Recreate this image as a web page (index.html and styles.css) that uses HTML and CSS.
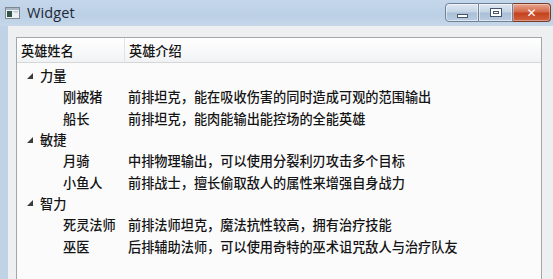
FILE: index.html
```html
<!DOCTYPE html>
<html lang="zh-CN">
<head>
    <meta charset="UTF-8">
    <meta name="viewport" content="width=device-width, initial-scale=1.0">
    <title>Widget</title>
    <link rel="stylesheet" href="styles.css">
</head>
<body>
    <div class="window">
        <div class="titlebar">
            <svg class="app-icon" width="15" height="12" viewBox="0 0 15 12">
                <rect x="0.5" y="0.5" width="14" height="11" fill="#eef1f4" stroke="#7f8790"/>
                <rect x="1" y="1" width="13" height="2" fill="#a9b6c4"/>
                <rect x="2" y="4" width="5" height="6" fill="#35574a"/>
                <rect x="8.5" y="4" width="4.5" height="1.5" fill="#c2c8cf"/>
            </svg>
            <span class="title">Widget</span>
            <div class="controls">
                <div class="ctl ctl-min"><span class="glyph-min"></span></div>
                <div class="ctl ctl-max"><span class="glyph-max"></span></div>
                <div class="ctl ctl-close">&#x2715;</div>
            </div>
        </div>

        <div class="client">
            <div class="tree">
                <div class="tree-header">
                    <div class="col col-name">英雄姓名</div>
                    <div class="col col-desc">英雄介绍</div>
                </div>

                <div class="row group"><div class="name"><span class="arrow"></span>力量</div><div class="desc"></div></div>
                <div class="row"><div class="name child">刚被猪</div><div class="desc">前排坦克，能在吸收伤害的同时造成可观的范围输出</div></div>
                <div class="row"><div class="name child">船长</div><div class="desc">前排坦克，能肉能输出能控场的全能英雄</div></div>

                <div class="row group"><div class="name"><span class="arrow"></span>敏捷</div><div class="desc"></div></div>
                <div class="row"><div class="name child">月骑</div><div class="desc">中排物理输出，可以使用分裂利刃攻击多个目标</div></div>
                <div class="row"><div class="name child">小鱼人</div><div class="desc">前排战士，擅长偷取敌人的属性来增强自身战力</div></div>

                <div class="row group"><div class="name"><span class="arrow"></span>智力</div><div class="desc"></div></div>
                <div class="row"><div class="name child">死灵法师</div><div class="desc">前排法师坦克，魔法抗性较高，拥有治疗技能</div></div>
                <div class="row"><div class="name child">巫医</div><div class="desc">后排辅助法师，可以使用奇特的巫术诅咒敌人与治疗队友</div></div>
            </div>
        </div>
    </div>
</body>
</html>
```

FILE: styles.css
```css
* {
    margin: 0;
    padding: 0;
    box-sizing: border-box;
}

body {
    width: 553px;
    height: 279px;
    overflow: hidden;
    background: #bfd2e6;
    font-family: "Noto Sans CJK SC", "Noto Sans", sans-serif;
    color: #141414;
}

.window {
    display: flex;
    flex-direction: column;
    height: 100%;
}

/* Title bar */
.titlebar {
    height: 26px;
    flex: none;
    display: flex;
    align-items: flex-start;
    background: linear-gradient(to bottom, #c4d6ea 0%, #bcd0e5 60%, #c6d7e9 100%);
}

.app-icon {
    margin: 7px 0 0 5px;
}

.title {
    margin: 3px 0 0 7px;
    font-family: "Open Sans", "Noto Sans", sans-serif;
    font-size: 14.5px;
    color: #1c2838;
    letter-spacing: 0.1px;
}

.controls {
    margin-left: auto;
    margin-right: 2px;
    display: flex;
    margin-top: 3px;
}

.ctl {
    height: 19px;
    border: 1px solid #6f8197;
    display: flex;
    align-items: center;
    justify-content: center;
}

.ctl-min,
.ctl-max {
    width: 34px;
    background: linear-gradient(to bottom, #dfe8f2 0%, #c3d3e4 48%, #aabfd6 52%, #b9cbe0 100%);
    box-shadow: inset 0 0 0 1px rgba(255, 255, 255, 0.55);
}

.ctl-min {
    border-radius: 4px 0 0 4px;
}

.ctl-max {
    border-left: none;
}

.ctl-close {
    width: 38px;
    border-left: none;
    border-color: #7a3a2a;
    border-radius: 0 4px 4px 0;
    background: linear-gradient(to bottom, #e8a68f 0%, #d46a4b 45%, #c4431f 55%, #d2603e 100%);
    box-shadow: inset 0 0 0 1px rgba(255, 255, 255, 0.35);
    color: #fff;
    font-size: 12px;
    font-weight: bold;
    font-family: "DejaVu Sans", sans-serif;
}

.glyph-min {
    display: block;
    width: 11px;
    height: 4px;
    margin-top: 7px;
    background: #fff;
    border: 1px solid #43566e;
}

.glyph-max {
    display: block;
    width: 12px;
    height: 9px;
    background: #fff;
    border: 1px solid #43566e;
    box-shadow: inset 0 0 0 2px #fff, inset 0 0 0 3px #43566e;
}

/* Client area */
.client {
    flex: 1;
    margin-left: 8px;
    background: #eeeff1;
    padding: 11px 11px 0 8px;
    display: flex;
}

.tree {
    flex: 1;
    background: #fbfbfc;
    border: 1px solid #a3a6ab;
    border-bottom: none;
    font-size: 13.2px;
    font-weight: 500;
}

.tree-header {
    height: 25px;
    display: grid;
    grid-template-columns: 108px 1fr;
    background: linear-gradient(to bottom, #ffffff 0%, #f7f8f9 60%, #f1f2f4 100%);
    border-bottom: 1px solid #d5d6d8;
}

.col {
    display: flex;
    align-items: center;
    padding-top: 1px;
}

.col-name {
    padding-left: 4px;
    border-right: 1px solid #e2e3e5;
}

.col-desc {
    padding-left: 4px;
}

.row {
    height: 21.3px;
    display: grid;
    grid-template-columns: 111px 1fr;
    align-items: center;
}

.tree-header + .row {
    margin-top: 2px;
}

.name {
    display: flex;
    align-items: center;
    padding-left: 23px;
    white-space: nowrap;
}

.name.child {
    padding-left: 46px;
}

.desc {
    white-space: nowrap;
}

.arrow {
    width: 0;
    height: 0;
    margin-left: -13px;
    margin-right: 7px;
    border-left: 6px solid transparent;
    border-bottom: 6px solid #3c3c3c;
}
```
